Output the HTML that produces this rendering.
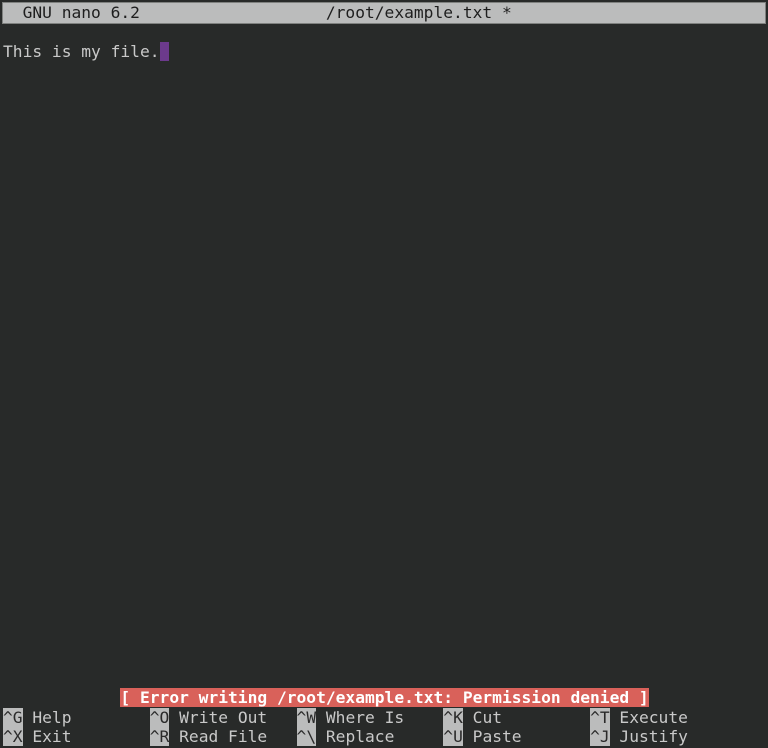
<!DOCTYPE html>
<html><head><style>
html,body{margin:0;padding:0;background:#282a29;width:768px;height:748px;overflow:hidden}
.r{position:absolute;left:3px;height:19.6px;line-height:19.6px;font-family:"DejaVu Sans Mono","Liberation Mono",monospace;font-size:16.25px;color:#c9c9c9;white-space:pre;letter-spacing:0}
.t{background:#bbbcbc;color:#1e1e1e;width:762px;box-shadow:0 0 0 1px #7f817f}
.k{background:#bbbcbc;color:#2a2a2a}
.e{background:#d9615a;color:#fff;font-weight:bold}
.c{background:#6c3a8c}
</style></head><body>
<div class="r t" style="top:3px">  GNU nano 6.2                   /root/example.txt *</div>
<div class="r" style="top:42.2px">This is my file.<span class="c"> </span></div>
<div class="r" style="top:688px">            <span class="e">[ Error writing /root/example.txt: Permission denied ]</span></div>
<div class="r" style="top:707.6px"><span class="k">^G</span> Help        <span class="k">^O</span> Write Out   <span class="k">^W</span> Where Is    <span class="k">^K</span> Cut         <span class="k">^T</span> Execute</div>
<div class="r" style="top:727.2px"><span class="k">^X</span> Exit        <span class="k">^R</span> Read File   <span class="k">^\</span> Replace     <span class="k">^U</span> Paste       <span class="k">^J</span> Justify</div>
</body></html>
